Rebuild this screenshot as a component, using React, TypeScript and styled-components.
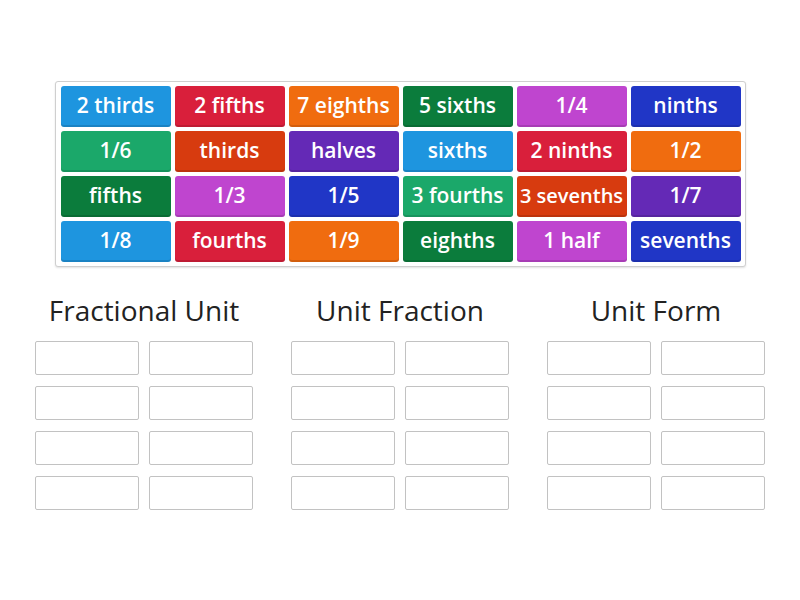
import React from 'react';
import styled, { createGlobalStyle } from 'styled-components';

const GlobalStyle = createGlobalStyle`
  html, body {
    margin: 0;
    padding: 0;
    background: #ffffff;
  }
  body {
    font-family: 'Open Sans', 'Liberation Sans', sans-serif;
  }
`;

const colors: Record<string, string> = {
  blue: '#1e95df',
  red: '#d91f3b',
  orange: '#f06c0f',
  green: '#0b7c3c',
  magenta: '#bf45cf',
  royal: '#2036c6',
  teal: '#1ba86a',
  rust: '#d73b0f',
  purple: '#6429b6',
};

// label, colour, optional shrunk font size for long labels
const tiles: [string, string, number?][] = [
  ['2 thirds', 'blue'],
  ['2 fifths', 'red'],
  ['7 eighths', 'orange'],
  ['5 sixths', 'green'],
  ['1/4', 'magenta'],
  ['ninths', 'royal'],
  ['1/6', 'teal'],
  ['thirds', 'rust'],
  ['halves', 'purple'],
  ['sixths', 'blue'],
  ['2 ninths', 'red'],
  ['1/2', 'orange'],
  ['fifths', 'green'],
  ['1/3', 'magenta'],
  ['1/5', 'royal'],
  ['3 fourths', 'teal'],
  ['3 sevenths', 'rust', 20],
  ['1/7', 'purple'],
  ['1/8', 'blue'],
  ['fourths', 'red'],
  ['1/9', 'orange'],
  ['eighths', 'green'],
  ['1 half', 'magenta'],
  ['sevenths', 'royal'],
];

const groups = ['Fractional Unit', 'Unit Fraction', 'Unit Form'];

const Page = styled.div`
  width: 800px;
  height: 600px;
  display: flex;
  flex-direction: column;
  align-items: center;
  padding-top: 81px;
  box-sizing: border-box;
`;

const Panel = styled.div`
  display: grid;
  grid-template-columns: repeat(6, 110px);
  grid-auto-rows: 41px;
  gap: 4px;
  padding: 4px 4px 4px 5px;
  border: 1px solid #cfcfcf;
  border-radius: 3px;
  box-shadow: 0 1px 2px rgba(0, 0, 0, 0.12);
  background: #fff;
`;

const Tile = styled.div<{ $bg: string; $size?: number }>`
  display: flex;
  align-items: center;
  justify-content: center;
  padding-bottom: 3px;
  box-sizing: border-box;
  border-radius: 3px;
  background: ${({ $bg }) => $bg};
  box-shadow: inset 0 -2px 0 rgba(0, 0, 0, 0.12);
  color: #fff;
  font-size: ${({ $size }) => $size ?? 21}px;
  font-weight: 600;
  white-space: nowrap;
`;

const Groups = styled.div`
  display: flex;
  gap: 38px;
  margin-top: 25px;
`;

const Group = styled.div`
  width: 218px;
  display: flex;
  flex-direction: column;
  align-items: center;
`;

const Heading = styled.div`
  font-size: 28px;
  line-height: 36px;
  color: #222;
  white-space: nowrap;
  margin-bottom: 13px;
`;

const Slots = styled.div`
  display: grid;
  grid-template-columns: repeat(2, 104px);
  grid-auto-rows: 34px;
  column-gap: 10px;
  row-gap: 11px;
`;

const Slot = styled.div`
  border: 1px solid #c2c2c2;
  border-radius: 2px;
  box-sizing: border-box;
  background: #fff;
`;

export default function App() {
  return (
    <>
      <GlobalStyle />
      <Page>
        <Panel>
          {tiles.map(([label, c, size]) => (
            <Tile key={label} $bg={colors[c]} $size={size}>
              {label}
            </Tile>
          ))}
        </Panel>
        <Groups>
          {groups.map((g) => (
            <Group key={g}>
              <Heading>{g}</Heading>
              <Slots>
                {Array.from({ length: 8 }).map((_, i) => (
                  <Slot key={i} />
                ))}
              </Slots>
            </Group>
          ))}
        </Groups>
      </Page>
    </>
  );
}
